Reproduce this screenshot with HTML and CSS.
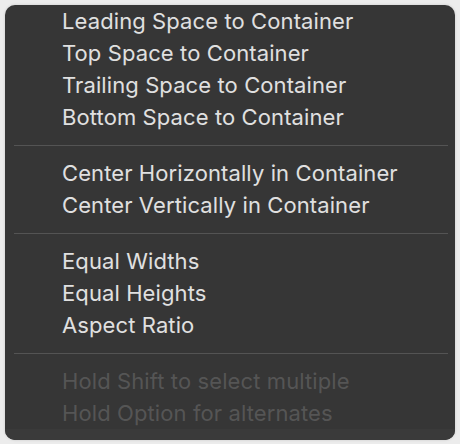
FILE: index.html
```html
<!DOCTYPE html>
<html>
<head>
  <title>Constraints Menu</title>
  <link rel="stylesheet" href="styles.css">
</head>
<body>
  <div class="menu">
    <div class="item">Leading Space to Container</div>
    <div class="item">Top Space to Container</div>
    <div class="item">Trailing Space to Container</div>
    <div class="item">Bottom Space to Container</div>
    <div class="separator"></div>
    <div class="item">Center Horizontally in Container</div>
    <div class="item">Center Vertically in Container</div>
    <div class="separator"></div>
    <div class="item">Equal Widths</div>
    <div class="item">Equal Heights</div>
    <div class="item">Aspect Ratio</div>
    <div class="separator"></div>
    <div class="item disabled">Hold Shift to select multiple</div>
    <div class="item disabled">Hold Option for alternates</div>
    <div class="menu-foot"></div>
  </div>
</body>
</html>
```

FILE: styles.css
```css
body {
  margin: 0;
  background-color: #ececec;
  font-family: Inter, "Liberation Sans", sans-serif;
}
.menu {
  width: 450px;
  height: 435px;
  margin: 5px;
  border-radius: 10px;
  background-color: #363636;
  box-shadow: 0 0 3px rgba(0, 0, 0, 0.15);
  overflow: hidden;
  display: flex;
  flex-direction: column;
}
.item {
  height: 32px;
  line-height: 32px;
  padding-left: 57px;
  font-size: 22px;
  letter-spacing: 0.1px;
  color: #e0e0e0;
  white-space: nowrap;
}
.item.disabled {
  color: #555555;
}
.separator {
  height: 1px;
  margin: 12px 7px 11px 9px;
  background-color: #545454;
}
.menu-foot {
  flex: 1;
  background-color: #3a3a3a;
}
```
